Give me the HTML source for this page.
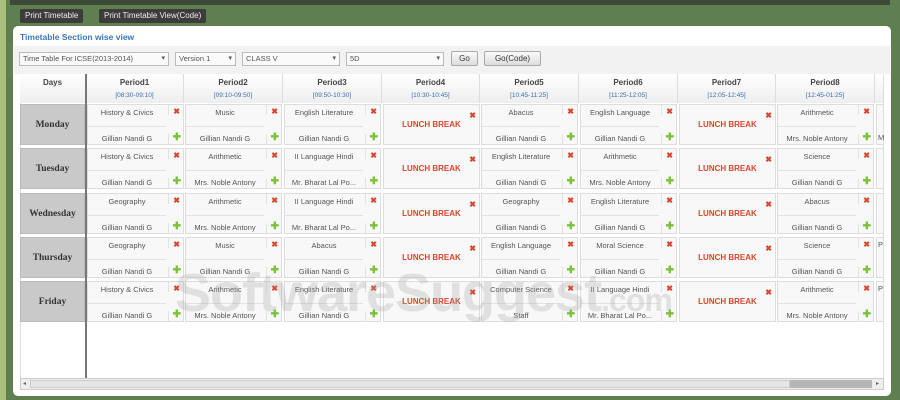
<!DOCTYPE html>
<html><head><style>
*{margin:0;padding:0;box-sizing:border-box}
body{width:900px;height:400px;overflow:hidden;background:#5f7f50;font-family:"Liberation Sans",sans-serif;position:relative}
.top{position:absolute;left:10px;top:0;width:880px;height:5px;background:#3d4a38}
.lstrip{position:absolute;left:0;top:0;width:6px;height:400px;background:#a9c07a}
.btn{position:absolute;top:9px;height:14px;background:#3c3c3c;color:#eee;font-size:8px;line-height:14px;padding:0 5px;border-radius:2px}
.panel{position:absolute;left:13px;top:26px;width:878px;height:370px;background:#fff;border-radius:5px}
.title{position:absolute;left:20px;top:32px;font-size:8.5px;font-weight:bold;color:#3a78b8}
.bar{position:absolute;left:14px;top:46px;width:876px;height:28px;background:#f2f2f2}
.sel{position:absolute;top:52px;height:14px;border:1px solid #bbb;background:#fafafa;font-size:7.5px;color:#555;line-height:12px;padding-left:3px}
.sel:after{content:"▾";position:absolute;right:3px;top:0;font-size:7px}
.gb{position:absolute;top:51px;height:15px;border:1px solid #aaa;border-radius:2px;background:linear-gradient(#fafafa,#ddd);font-size:8px;line-height:13px;text-align:center;color:#333}
.hd{position:absolute;top:74px;height:29px;background:linear-gradient(#fff,#eee);border-right:1px solid #ddd;text-align:center;font-weight:bold;font-size:8px;color:#444;padding-top:4px}
.hd span{display:block;font-weight:normal;font-size:6.5px;color:#3a6fb0;margin-top:5px}
.day{position:absolute;left:20px;width:65px;height:41px;background:#c9c9c9;border:1px solid #bbb;font-family:"Liberation Serif",serif;font-weight:bold;font-size:9.5px;color:#333;text-align:center;line-height:41px}
.c{position:absolute;width:97px;height:41px;background:#f8f8f8;border:1px solid #ddd;font-size:7.5px;color:#555}
.c .s{position:absolute;left:0;top:3px;width:78px;text-align:center}
.c .t{position:absolute;left:0;bottom:1px;width:78px;text-align:center;white-space:nowrap;overflow:hidden}
.c .ln{position:absolute;left:0;top:21px;width:78px;border-top:1px solid #e2e2e2}
.c .vr{position:absolute;left:80px;top:0;height:10px;border-left:1px solid #e2e2e2}
.c .vr2{position:absolute;left:80px;bottom:0;height:10px;border-left:1px solid #e2e2e2}
.x{position:absolute;right:3px;top:2px;color:#d9452b;font-size:8px;font-weight:bold}
.p{position:absolute;right:2px;bottom:1px;color:#7bc13a;font-size:10px;font-weight:bold}
.lb{position:absolute;left:0;top:0;width:95px;line-height:40px;text-align:center;color:#d9452b;font-weight:bold;font-size:8px}
.vline{position:absolute;left:85px;top:74px;width:2px;height:305px;background:#777}
.sb{position:absolute;left:20px;top:378px;width:864px;height:12px;background:#eee;border:1px solid #ccc}
.th{position:absolute;left:30px;top:380px;width:760px;height:8px;background:#e6e6e6;border:1px solid #ccc}
.tr{position:absolute;left:790px;top:380px;width:82px;height:8px;background:#b5b5b5}
.wm{position:absolute;left:175px;top:262px;font-size:54px;font-weight:bold;color:rgba(160,160,160,.28);letter-spacing:-1px}
</style></head><body>
<div class="lstrip"></div><div class="top"></div>
<div class="btn" style="left:20px">Print Timetable</div>
<div class="btn" style="left:99px">Print Timetable View(Code)</div>
<div class="panel"></div>
<div class="title">Timetable Section wise view</div>
<div class="bar"></div>
<div class="sel" style="left:19px;width:150px">Time Table For ICSE(2013-2014)</div>
<div class="sel" style="left:175px;width:61px">Version 1</div>
<div class="sel" style="left:242px;width:98px">CLASS V</div>
<div class="sel" style="left:346px;width:98px">5D</div>
<div class="gb" style="left:451px;width:27px">Go</div>
<div class="gb" style="left:484px;width:57px">Go(Code)</div>
<div style="position:absolute;left:20px;top:74px;width:864px;height:305px;border:1px solid #ddd"></div>
<div class="hd" style="left:20px;width:66px">Days</div>
<div class="hd" style="left:86px;width:98px">Period1<span>[08:30-09:10]</span></div>
<div class="hd" style="left:184px;width:99px">Period2<span>[09:10-09:50]</span></div>
<div class="hd" style="left:283px;width:99px">Period3<span>[09:50-10:30]</span></div>
<div class="hd" style="left:382px;width:98px">Period4<span>[10:30-10:45]</span></div>
<div class="hd" style="left:480px;width:99px">Period5<span>[10:45-11:25]</span></div>
<div class="hd" style="left:579px;width:99px">Period6<span>[11:25-12:05]</span></div>
<div class="hd" style="left:678px;width:98px">Period7<span>[12:05-12:45]</span></div>
<div class="hd" style="left:776px;width:99px">Period8<span>[12:45-01:25]</span></div>
<div class="hd" style="left:875px;width:9px"></div>
<div class="vline"></div>
<div id="g"></div>
<script>
var cols=[87,185,284,383,481,580,679,777,876],tops=[104,148,193,237,281];
var days=["Monday","Tuesday","Wednesday","Thursday","Friday"];
var d=[
[["History & Civics","Gillian Nandi G"],["Music","Gillian Nandi G"],["English Literature","Gillian Nandi G"],0,["Abacus","Gillian Nandi G"],["English Language","Gillian Nandi G"],0,["Arithmetic","Mrs. Noble Antony"],["","M"]],
[["History & Civics","Gillian Nandi G"],["Arithmetic","Mrs. Noble Antony"],["II Language Hindi","Mr. Bharat Lal Po..."],0,["English Literature","Gillian Nandi G"],["Arithmetic","Mrs. Noble Antony"],0,["Science","Gillian Nandi G"],["",""]],
[["Geography","Gillian Nandi G"],["Arithmetic","Mrs. Noble Antony"],["II Language Hindi","Mr. Bharat Lal Po..."],0,["Geography","Gillian Nandi G"],["English Literature","Gillian Nandi G"],0,["Abacus","Gillian Nandi G"],["",""]],
[["Geography","Gillian Nandi G"],["Music","Gillian Nandi G"],["Abacus","Gillian Nandi G"],0,["English Language","Gillian Nandi G"],["Moral Science","Gillian Nandi G"],0,["Science","Gillian Nandi G"],["P",""]],
[["History & Civics","Gillian Nandi G"],["Arithmetic","Mrs. Noble Antony"],["English Literature","Gillian Nandi G"],0,["Computer Science","Staff"],["II Language Hindi","Mr. Bharat Lal Po..."],0,["Arithmetic","Mrs. Noble Antony"],["P",""]]];
var h="";
for(var r=0;r<5;r++){h+='<div class="day" style="top:'+tops[r]+'px">'+days[r]+'</div>';
for(var c=0;c<9;c++){var v=d[r][c],w=c==8?8:97;
h+='<div class="c" style="left:'+cols[c]+'px;top:'+tops[r]+'px;width:'+w+'px">';
if(c==8){h+='<div style="position:absolute;left:1px;top:2px">'+v[0]+'</div><div style="position:absolute;left:1px;bottom:2px">'+v[1]+'</div>';}
else if(v===0){h+='<div class="lb">LUNCH BREAK</div><div class="x" style="top:6px">✖</div>';}
else{h+='<div class="s">'+v[0]+'</div><div class="ln"></div><div class="t">'+v[1]+'</div><div class="vr"></div><div class="vr2"></div><div class="x">✖</div><div class="p">✚</div>';}
h+='</div>';}}
document.getElementById("g").innerHTML=h;
</script>
<div class="wm">SoftwareSuggest<span style="font-size:32px">.com</span></div>
<div class="sb"></div><div class="th"></div><div class="tr"></div>
<div style="position:absolute;left:23px;top:380px;font-size:6px;color:#666">◂</div>
<div style="position:absolute;left:876px;top:380px;font-size:6px;color:#666">▸</div>
</body></html>
